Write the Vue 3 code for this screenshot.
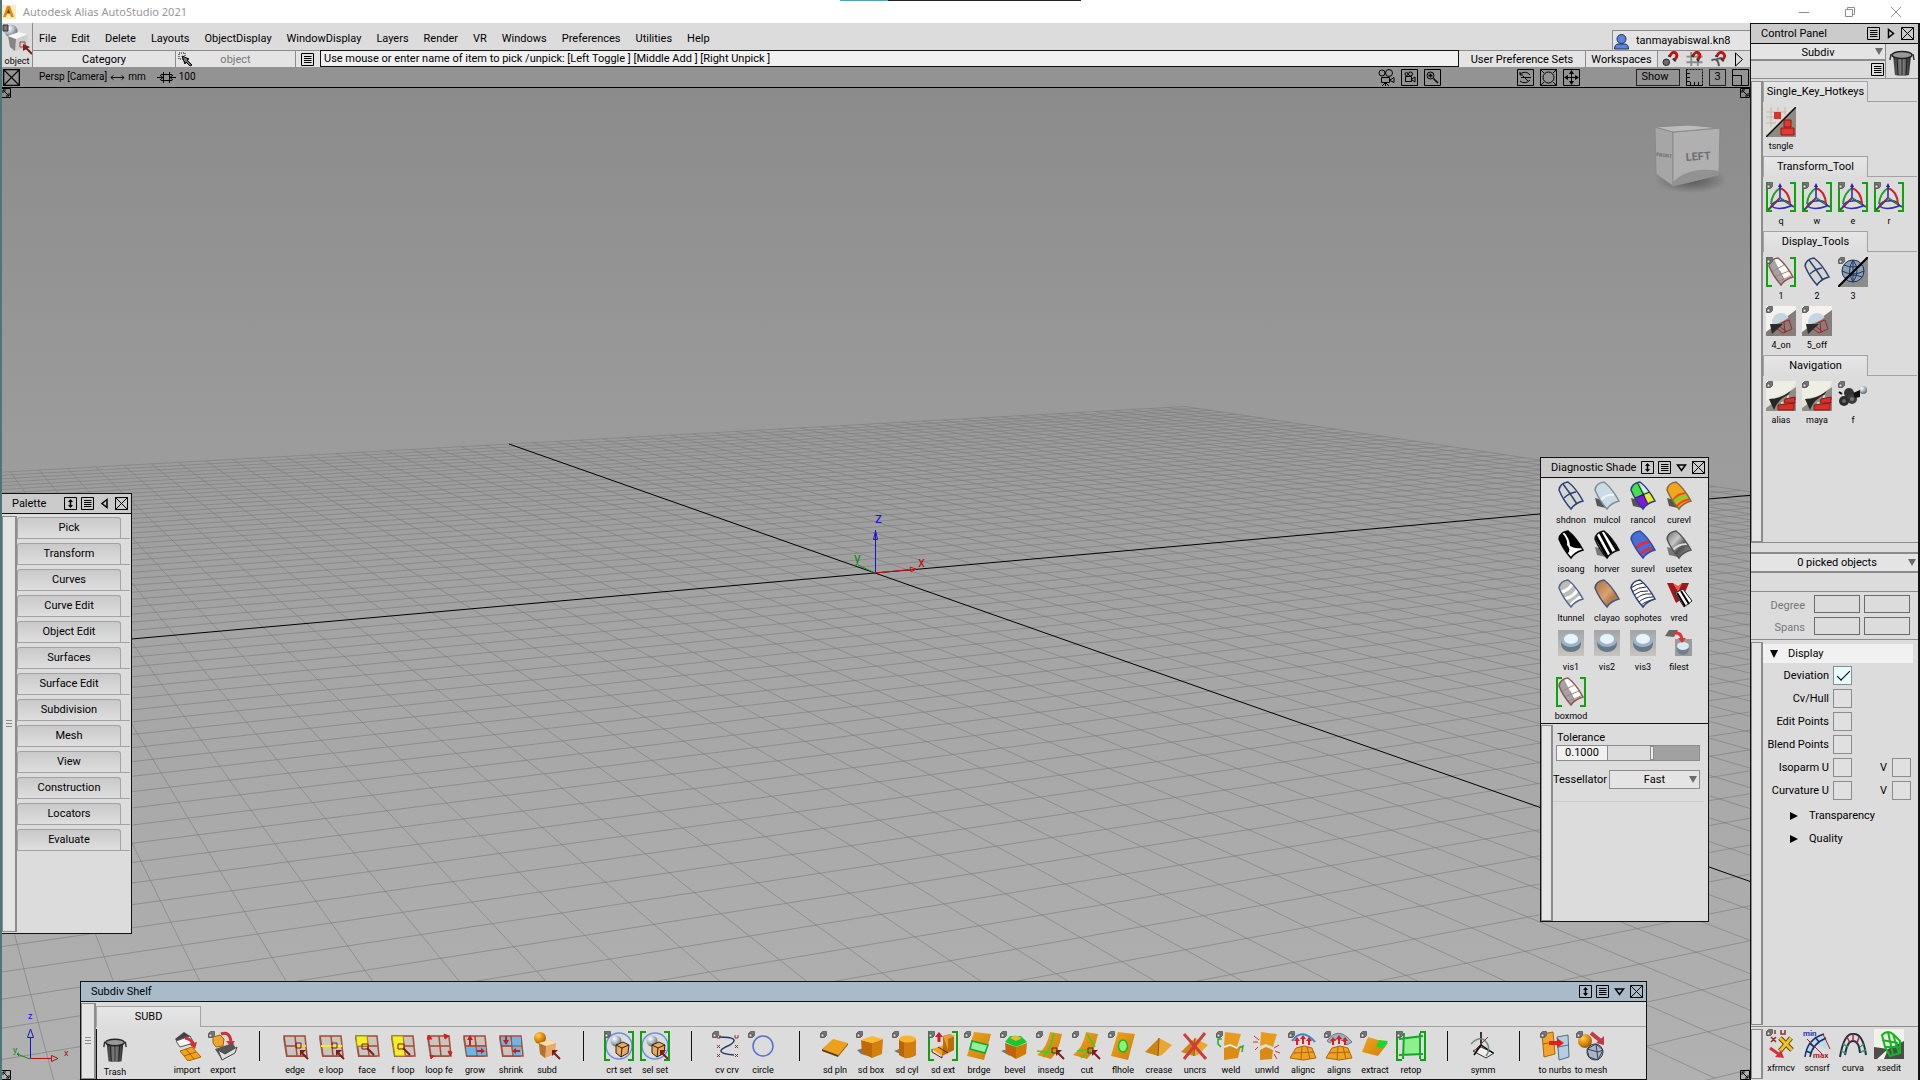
<template>
  <div class="app">
    <svg class="sprite" aria-hidden="true">
      <defs>
        <linearGradient id="g-metal" x1="0" y1="0" x2="1" y2="1">
          <stop offset="0" stop-color="#6a6a6a" /><stop offset=".35" stop-color="#c8c8c8" />
          <stop offset=".6" stop-color="#505050" /><stop offset="1" stop-color="#b0b0b0" />
        </linearGradient>
        <linearGradient id="g-clay" x1="0" y1="0" x2="1" y2="1">
          <stop offset="0" stop-color="#a8703f" /><stop offset=".5" stop-color="#d9a273" />
          <stop offset=".7" stop-color="#b37a4c" /><stop offset="1" stop-color="#c98e5f" />
        </linearGradient>
        <linearGradient id="g-gold" x1="0" y1="0" x2="1" y2="1">
          <stop offset="0" stop-color="#f0a41a" /><stop offset="1" stop-color="#cf7f0c" />
        </linearGradient>
        <linearGradient id="g-vis" x1="0" y1="0" x2="0" y2="1">
          <stop offset="0" stop-color="#a4a4a4" /><stop offset="1" stop-color="#c8c4c0" />
        </linearGradient>
        <linearGradient id="g-trash" x1="0" y1="0" x2="1" y2="0">
          <stop offset="0" stop-color="#333" /><stop offset=".5" stop-color="#8a8a8a" /><stop offset="1" stop-color="#222" />
        </linearGradient>
        <radialGradient id="g-ball" cx=".35" cy=".3" r=".8">
          <stop offset="0" stop-color="#fff" /><stop offset=".5" stop-color="#a9b4bd" /><stop offset="1" stop-color="#4c555c" />
        </radialGradient>
        <radialGradient id="g-orange" cx=".35" cy=".3" r=".8">
          <stop offset="0" stop-color="#ffd05a" /><stop offset=".5" stop-color="#e08d0a" /><stop offset="1" stop-color="#8a4d00" />
        </radialGradient>
        <clipPath id="c-patch"><path d="M3 9Q4 2 12 1Q20 7 27 20Q19 22 15 28Q7 19 3 9Z" /></clipPath>
      </defs>

      <!-- overlays -->
      <symbol id="brackets" viewBox="0 0 30 30">
        <path d="M6 1H1V29H6M24 1H29V29H24" fill="none" stroke="#0ca30c" stroke-width="2" />
      </symbol>
      <symbol id="option" viewBox="0 0 30 30">
        <path d="M2.500 .5H6.500V4.500L4.500 6.500H.5V2.500Z" fill="#777" stroke="#666" /><path d="M1 3H4V6H1Z" fill="#f2f2f2" stroke="#555" />
      </symbol>
      <symbol id="pick-arrow" viewBox="0 0 30 30">
        <path d="M28 28L22 22" stroke="#7b1b1b" stroke-width="2" /><path d="M20 25V19H26Z" fill="#7b1b1b" />
      </symbol>

      <!-- window glyphs -->
      <symbol id="t-size" viewBox="0 0 13 13">
        <path d="M.5 .5H12.5V12.5H.5Z" fill="none" stroke="#000" />
        <path d="M6.500 3V10" stroke="#000" stroke-width="1.500" /><path d="M6.500 2L9 5H4ZM6.500 11L9 8H4Z" />
      </symbol>
      <symbol id="t-list" viewBox="0 0 13 13">
        <path d="M.5 .5H12.5V12.5H.5ZM3 3.500H10.500M3 5.500H10.500M3 7.500H10.500M3 9.500H10.500" fill="none" stroke="#000" />
      </symbol>
      <symbol id="t-close" viewBox="0 0 13 13">
        <path d="M.5 .5H12.5V12.5H.5ZM.5 .5L12.500 12.500M12.500 .5L.5 12.500" fill="none" stroke="#000" />
      </symbol>
      <symbol id="t-down" viewBox="0 0 13 13"><path d="M2.500 4H10.500L6.500 9.500Z" fill="none" stroke="#000" stroke-width="1.500" /></symbol>
      <symbol id="t-left" viewBox="0 0 13 13"><path d="M9 2.500V10.500L4 6.500Z" fill="none" stroke="#000" stroke-width="1.500" /></symbol>
      <symbol id="t-right" viewBox="0 0 13 13"><path d="M4.500 2.500V10.500L9.500 6.500Z" fill="none" stroke="#000" stroke-width="1.500" /></symbol>
      <symbol id="t-corner" viewBox="0 0 10 10">
        <path d="M.5 .5H9.500V9.500H.5ZM2 2L8 8M2 5V2H5M8 5V8H5" fill="none" stroke="#000" />
      </symbol>

      <!-- view header glyphs -->
      <symbol id="v-camera" viewBox="0 0 17 17">
        <circle cx="4" cy="4" r="3" fill="none" stroke="#000" /><circle cx="11" cy="4" r="3.500" fill="none" stroke="#000" />
        <path d="M3.500 8.500H11.500V13.500H3.500ZM12 11L16 8.500V13.500L12 11.500M7 14L4 17M8 14L11 17M7.500 13.500V17" fill="none" stroke="#000" />
      </symbol>
      <symbol id="v-look" viewBox="0 0 17 17">
        <path d="M.5 .5H16.500V16.500H.5ZM4.500 7.500H10.500V12.500H4.500ZM11 10L14 8V13L11 11" fill="none" stroke="#000" />
        <circle cx="5.500" cy="5" r="1.500" fill="none" stroke="#000" /><circle cx="9.500" cy="5" r="2" fill="none" stroke="#000" />
      </symbol>
      <symbol id="v-zoom" viewBox="0 0 17 17">
        <path d="M.5 .5H16.500V16.500H.5Z" fill="none" stroke="#000" />
        <circle cx="6.500" cy="6.500" r="3.500" fill="none" stroke="#000" /><path d="M4.500 6.500H8.500M6.500 4.500V8.500M9.500 9.500L14 14" stroke="#000" stroke-width="1.500" />
      </symbol>
      <symbol id="v-tumble" viewBox="0 0 17 17">
        <path d="M.5 .5H16.500V16.500H.5ZM3 5Q9 1 13 6M3 12Q8 16 13 11M4 8.500H14M6 7L11 12M3 3V6H6" fill="none" stroke="#000" />
      </symbol>
      <symbol id="v-frame" viewBox="0 0 17 17">
        <path d="M.5 .5H16.500V16.500H.5ZM.5 .5L4 4M16.500 .5L13 4M.5 16.500L4 13M16.500 16.500L13 13" fill="none" stroke="#000" />
        <circle cx="8.500" cy="8.500" r="5.500" fill="none" stroke="#000" />
      </symbol>
      <symbol id="v-pan" viewBox="0 0 17 17">
        <path d="M.5 .5H16.500V16.500H.5ZM8.500 2V15M2 8.500H15" fill="none" stroke="#000" />
        <path d="M8.500 1L11 5H6ZM8.500 16L11 12H6ZM1 8.500L5 6V11ZM16 8.500L12 6V11Z" />
      </symbol>
      <symbol id="v-ruler" viewBox="0 0 17 17">
        <path d="M.5 .5H16.500V16.500H.5Z" fill="none" stroke="#000" stroke-dasharray="2 1" />
        <path d="M.5 .5V16.500H16.500M1 4.500H4M1 8.500H4M1 12.500H4M4.500 16V13M8.500 16V13M12.500 16V13" fill="none" stroke="#000" />
      </symbol>
      <symbol id="v-layout" viewBox="0 0 17 17"><path d="M.5 16.500V.5H16.500V16.500ZM.5 6.500H9.500V16.500" fill="none" stroke="#000" /></symbol>
      <symbol id="v-arrows" viewBox="0 0 17 11"><path d="M1 5.500H16M4 3L1 5.500L4 8M13 3L16 5.500L13 8" fill="none" stroke="#000" /></symbol>
      <symbol id="v-grid" viewBox="0 0 19 13">
        <path d="M6.500 1V12M12.500 1V12M4 3.500H15M4 9.500H15" stroke="#000" /><path d="M0 6.500H6M13 6.500H19M3 4L6 6.500L3 9M16 4L13 6.500L16 9" stroke="#000" fill="none" />
      </symbol>

      <!-- top bar pictures -->
      <symbol id="logo" viewBox="0 0 14 14">
        <path d="M0 0H14V14H0Z" fill="#fdebc8" /><path d="M5 1H8L12 12H9L8 9H5L4 12H1Z" fill="#dd8a0c" /><path d="M6.500 4L8 8H5Z" fill="#6b3b00" />
      </symbol>
      <symbol id="pick-object" viewBox="0 0 30 32">
        <circle cx="9" cy="8" r="6.500" fill="url(#g-ball)" /><path d="M1 2H6V8H1Z" fill="#777" stroke="#333" />
        <path d="M6 13L17 9L26 11L25 25L13 28L8 24Z" fill="#cfcfcf" /><path d="M6 13L14 16L13 28L8 24Z" fill="#858585" /><path d="M6 13L17 9L26 11L14 16Z" fill="#f6f6f6" />
        <path d="M18 19H23V24H18Z" fill="none" stroke="#a04040" /><path d="M30 31L24 25" stroke="#7b2020" stroke-width="2" /><path d="M21 28V21L28 24Z" fill="#7b2020" />
      </symbol>
      <symbol id="user" viewBox="0 0 16 17">
        <circle cx="8" cy="6" r="4.500" fill="#5b84dd" stroke="#1d2d55" /><path d="M1 16Q1 11 5 11H11Q15 11 15 16Z" fill="#5b84dd" stroke="#1d2d55" />
      </symbol>
      <symbol id="cursor" viewBox="0 0 15 15">
        <path d="M1 1H7V7H1Z" fill="none" stroke="#000" stroke-dasharray="1 1" /><path d="M4 4L11 7L9 8L14 13L12 14L8 10L7 12Z" fill="#777" stroke="#000" />
      </symbol>
      <symbol id="snap-point" viewBox="0 0 18 17">
        <circle cx="4" cy="12" r="3.500" fill="#6b6b6b" stroke="#222" /><path d="M8 5Q10 0 14 2Q17 5 13 9" fill="none" stroke="#c80f0f" stroke-width="3" /><path d="M6 5L9 6M11 8L14 11" stroke="#333" stroke-width="2" />
      </symbol>
      <symbol id="snap-grid" viewBox="0 0 18 17">
        <path d="M5 1V16M12 1V16M0 6H17M0 12H17" stroke="#8b8b8b" stroke-width="2" /><path d="M7 5Q9 0 13 2Q16 5 12 9" fill="none" stroke="#c80f0f" stroke-width="3" /><path d="M5 5L8 6M11 8L13 11" stroke="#333" stroke-width="2" />
      </symbol>
      <symbol id="snap-curve" viewBox="0 0 18 17">
        <path d="M1 10Q8 6 9 16M6 9L12 7" fill="none" stroke="#555" stroke-width="2" /><path d="M7 5Q9 0 13 2Q17 5 13 9" fill="none" stroke="#c80f0f" stroke-width="3" /><path d="M5 5L8 6M11 8L14 11" stroke="#333" stroke-width="2" />
      </symbol>

      <!-- shelf pictures -->
      <symbol id="trash" viewBox="0 0 30 30">
        <path d="M6 8H24L22 28Q15 30 8 28Z" fill="url(#g-trash)" /><path d="M10 10L11 28M15 10V28M20 10L19 28" stroke="#1c1c1c" />
        <ellipse cx="15" cy="8" rx="10" ry="3.500" fill="#999" stroke="#222" stroke-width="1.500" /><path d="M4 7L3 13M26 7L27 13" stroke="#333" stroke-width="1.500" />
      </symbol>
      <symbol id="keys" viewBox="0 0 30 30">
        <path d="M0 0H30L0 30Z" fill="#deddd5" /><path d="M30 0V30H0Z" fill="#8d8b82" /><path d="M0 5H20M0 10H15M0 16H10M5 0V20M12 0V12M19 0V8" stroke="#bdbbb2" />
        <path d="M8 5H15V12H8Z" fill="#d8322b" /><path d="M18 13H25V20H18ZM15 21H28V28H15Z" fill="#e23a33" stroke="#8e1712" /><path d="M0 30L30 0" stroke="#000" stroke-width="1.500" />
      </symbol>
      <symbol id="gizmo" viewBox="0 0 30 30">
        <path d="M14 16L2 28M14 16L28 25" stroke="#4a4a4a" stroke-width="2" /><path d="M5 24Q12 29 25 24Q24 18 14 19Q8 19 5 24" fill="none" stroke="#2a2ac0" stroke-width="1.500" />
        <path d="M14 6Q23 9 24 22" fill="none" stroke="#d42020" stroke-width="2" /><path d="M14 6Q6 11 5 22" fill="none" stroke="#1fa01f" stroke-width="2" />
        <path d="M14 17V3" stroke="#2020c0" stroke-width="1.500" /><path d="M14 1L16 5H12Z" fill="#2020c0" /><path d="M14 16L24 22" stroke="#1fa01f" /><path d="M14 16L4 25" stroke="#d42020" />
      </symbol>
      <symbol id="box-shade" viewBox="0 0 30 30">
        <g clip-path="url(#c-patch)"><path d="M0 0H30V30H0Z" fill="#fff" /><path d="M0 0L8 2L20 26L12 30L0 12Z" fill="#a4a4a4" /><path d="M5 15L18 8M8 20L23 14M11 25L27 18M14 14L20 27" stroke="#a88078" fill="none" /></g>
        <use href="#patch-line" stroke="#8a5a50" />
      </symbol>
      <symbol id="patch-line" viewBox="0 0 30 30"><path d="M3 9Q4 2 12 1Q20 7 27 20Q19 22 15 28Q7 19 3 9Z" fill="none" stroke-width="1.500" /></symbol>
      <symbol id="wire" viewBox="0 0 30 30">
        <path d="M3 9Q4 2 12 1Q20 7 27 20Q19 22 15 28Q7 19 3 9Z" fill="#d6d6d2" /><path d="M7 3Q14 12 21 23M8 17Q13 12 20 11" fill="none" stroke="#2c4078" stroke-width="1.500" />
        <use href="#patch-line" stroke="#2c4078" />
      </symbol>
      <symbol id="wire-ball" viewBox="0 0 30 30">
        <path d="M30 0V30H0Z" fill="#8c8c8c" /><circle cx="15" cy="14" r="11" fill="#8ba0b5" /><path d="M4 14Q15 20 26 14M15 3Q8 14 15 25M15 3Q23 14 15 25M6 8Q15 12 24 8M7 21Q15 16 24 20M15 3V25" fill="none" stroke="#1f3157" />
        <circle cx="15" cy="14" r="11" fill="none" stroke="#1f3157" /><path d="M0 30L30 0" stroke="#000" stroke-width="2" />
      </symbol>
      <symbol id="dome" viewBox="0 0 30 30">
        <path d="M0 0H30V30H0Z" fill="#f3f2ee" /><path d="M30 4V30H0V26Z" fill="#7d7976" /><circle cx="15" cy="16" r="9" fill="#c6d6e0" /><path d="M5 19Q20 17 30 4V30H8Z" fill="#857e7a" />
        <path d="M10 22Q16 15 23 14L26 23L17 27ZM13 20L21 26M18 16L19 27" fill="none" stroke="#a62525" /><path d="M4 18L17 18L6 28Z" fill="#2b2b2b" />
      </symbol>
      <symbol id="nav" viewBox="0 0 30 30">
        <path d="M0 0H30V30H0Z" fill="#e4e2d6" /><path d="M30 6V30H0V27Z" fill="#8f8d86" /><path d="M15 22L30 20M22 14V29" stroke="#d8d5cc" stroke-width="2" /><path d="M19 18L29 16V22H18ZM12 24L28 22V29H12Z" fill="#d4302c" stroke="#8e1712" />
        <path d="M0 0H30Q26 14 3 18L0 20Z" fill="#efeee4" /><path d="M3 18Q14 18 25 10L22 14Q12 18 8 29Z" fill="#262626" />
      </symbol>
      <symbol id="film" viewBox="0 0 30 30">
        <circle cx="11" cy="12" r="5" fill="#333" /><circle cx="14" cy="18" r="5" fill="#3c3c3c" /><circle cx="6" cy="20" r="5" fill="#2b2b2b" /><circle cx="25" cy="9" r="4" fill="url(#g-ball)" />
        <path d="M15 12L22 9V16L17 17Z" fill="#111" /><circle cx="14" cy="18" r="2" fill="#777" /><circle cx="6" cy="20" r="2" fill="#666" /><path d="M1 11L4 13" stroke="#000" stroke-width="2" />
      </symbol>
      <symbol id="s-mul" viewBox="0 0 30 30"><path d="M3 17L14 20V27L5 25Z" fill="#555" /><path d="M3 9Q4 2 12 1Q20 7 27 20Q19 22 15 28Q7 19 3 9Z" fill="#ccdbe5" /><path d="M9 19Q14 13 22 14" stroke="#eef6fa" stroke-width="2" fill="none" /><use href="#patch-line" stroke="#7d909e" /></symbol>
      <symbol id="s-ran" viewBox="0 0 30 30"><path d="M3 17L14 20V27L5 25Z" fill="#555" /><g clip-path="url(#c-patch)"><path d="M0 0H30V30H0Z" fill="#44e04e" /><path d="M10 0L16 12L30 8V0Z" fill="#d8ebf2" /><path d="M7 17L16 12L22 30H7Z" fill="#7d18e0" /><path d="M16 13L30 9V24L20 24Z" fill="#e9ef27" /><path d="M9 1L21 25M7 17L22 11" stroke="#223" /></g><use href="#patch-line" stroke="#2c4078" /></symbol>
      <symbol id="s-cur" viewBox="0 0 30 30"><path d="M3 17L14 20V27L5 25Z" fill="#555" /><g clip-path="url(#c-patch)"><path d="M0 0H30V30H0Z" fill="#f2a51e" /><path d="M9 19Q14 12 23 12" stroke="#e75218" stroke-width="2" fill="none" /><path d="M10 21Q16 15 25 15" stroke="#7bd624" stroke-width="3" fill="none" /><path d="M13 25Q18 19 27 18" stroke="#ec4a1c" stroke-width="2" fill="none" /></g><use href="#patch-line" stroke="#8a6a3a" /></symbol>
      <symbol id="s-iso" viewBox="0 0 30 30"><g clip-path="url(#c-patch)"><path d="M0 0H30V30H0Z" /><path d="M7 1Q14 9 14 16Q21 20 28 17L28 23Q17 23 15 29L11 24Q16 20 11 15Q12 9 6 3Z" fill="#fff" /></g><use href="#patch-line" stroke="#000" /></symbol>
      <symbol id="s-hor" viewBox="0 0 30 30"><path d="M3 17L14 20V27L5 25Z" fill="#777" /><g clip-path="url(#c-patch)"><path d="M0 0H30V30H0Z" fill="#fff" /><path d="M2 3L17 30M7 0L22 28M12 -1L28 25" stroke="#000" stroke-width="3" /></g><use href="#patch-line" stroke="#111" /></symbol>
      <symbol id="s-sur" viewBox="0 0 30 30"><g clip-path="url(#c-patch)"><path d="M0 0H30V30H0Z" fill="#496ed6" /><path d="M8 18Q14 12 22 12M12 25Q18 18 27 18" stroke="#d92e46" stroke-width="3" fill="none" /></g><use href="#patch-line" stroke="#2c4aa8" /></symbol>
      <symbol id="s-use" viewBox="0 0 30 30"><path d="M3 17L14 20V27L5 25Z" fill="#777" /><path d="M3 9Q4 2 12 1Q20 7 27 20Q19 22 15 28Q7 19 3 9Z" fill="url(#g-metal)" /><path d="M9 20Q14 14 23 14" stroke="#ddd" stroke-width="2" fill="none" /><use href="#patch-line" stroke="#555" /></symbol>
      <symbol id="s-tun" viewBox="0 0 30 30"><g clip-path="url(#c-patch)"><path d="M0 0H30V30H0Z" fill="#bcbcb8" /><path d="M3 13Q12 13 17 4M8 20Q19 18 22 9M15 26Q20 20 27 17" stroke="#fff" stroke-width="3" fill="none" /></g><use href="#patch-line" stroke="#55658c" /></symbol>
      <symbol id="s-clay" viewBox="0 0 30 30"><path d="M3 9Q4 2 12 1Q20 7 27 20Q19 22 15 28Q7 19 3 9Z" fill="url(#g-clay)" /><use href="#patch-line" stroke="#4d5478" /></symbol>
      <symbol id="s-soph" viewBox="0 0 30 30"><g clip-path="url(#c-patch)"><path d="M0 0H30V30H0Z" fill="#fff" /><path d="M3 9Q8 5 15 4M4 13Q10 8 18 8M6 16Q12 11 20 12M8 20Q14 14 23 15M11 23Q16 18 25 18M13 26Q19 21 28 21" stroke="#2b2b38" stroke-width="1" fill="none" /></g><use href="#patch-line" stroke="#2c4078" /></symbol>
      <symbol id="s-vred" viewBox="0 0 30 30"><path d="M3 4H9L14 12L18 4H25L18 20L12 24Z" fill="#a3171b" /><path d="M9 4L14 12L18 4L14 7Z" fill="#ed5a3a" /><path d="M11 14L19 10L28 22L20 28Z" fill="#fff" stroke="#222" /><path d="M13 14L21 27M17 12L25 25" stroke="#000" stroke-width="2" /></symbol>
      <symbol id="s-vis" viewBox="0 0 30 30"><path d="M2 2H28V28H2Z" fill="url(#g-vis)" /><ellipse cx="15" cy="16" rx="10" ry="8" fill="#65798a" /><ellipse cx="15" cy="12" rx="10" ry="7" fill="#9cb4c4" /><ellipse cx="15" cy="11" rx="7" ry="5" fill="#e8f3fa" /></symbol>
      <symbol id="s-file" viewBox="0 0 30 30"><path d="M11 11H28V28H11Z" fill="#9b9b9b" /><ellipse cx="19" cy="21" rx="6" ry="6" fill="#6f818f" /><ellipse cx="19" cy="18" rx="6" ry="4" fill="#dce9f1" /><path d="M1 8L5 2H14L10 9Z" fill="#666" /><path d="M10 5Q17 4 18 11" stroke="#dd3540" stroke-width="3" fill="none" /><path d="M14 10H22L18 15Z" fill="#dd3540" /></symbol>

      <symbol id="import" viewBox="0 0 30 30"><path d="M3 8L12 1L18 5L8 14Z" fill="#444" /><path d="M4 10L18 5L22 12L8 16Z" fill="#f4f4f4" stroke="#555" /><path d="M13 7Q20 8 21 14" stroke="#d0323a" stroke-width="3" fill="none" /><path d="M17 13L25 11L23 18Z" fill="#d0323a" /><path d="M8 20L20 16L29 26L16 30Z" fill="#f3a31a" stroke="#a66505" /><path d="M12 25L24 21M14 18L22 28" stroke="#a66505" /></symbol>
      <symbol id="export" viewBox="0 0 30 30"><path d="M5 6L12 4L16 8L15 15L8 16L5 12Z" fill="#f0a62c" stroke="#9a6413" /><path d="M13 3Q22 0 23 11" stroke="#d0323a" stroke-width="3" fill="none" /><path d="M18 10H27L23 16Z" fill="#d0323a" /><path d="M7 18L25 12L28 18L14 29Z" fill="#555" /><path d="M10 19L17 23L29 16L27 22L14 29Z" fill="#ddd" stroke="#444" /></symbol>
      <symbol id="mesh" viewBox="0 0 30 30"><path d="M3 7L4 5L25 25L24 26H6Z" fill="#7c7c7c" /><path d="M4 5H25L27 25H7Z" fill="#c9c5bf" stroke="#a84a35" stroke-width="1.500" /><path d="M15 5L17 25M5 15H26" stroke="#a84a35" stroke-width="1.500" /></symbol>
      <symbol id="edge" viewBox="0 0 30 30"><use href="#mesh" /><path d="M17 15H26" stroke="#e9dd2c" stroke-width="2" /><path d="M16 12H21V17H16Z" fill="none" stroke="#7b1b1b" /><use href="#pick-arrow" /></symbol>
      <symbol id="eloop" viewBox="0 0 30 30"><use href="#mesh" /><path d="M5 15H26" stroke="#f5ef21" stroke-width="2" /><path d="M16 12H21V17H16Z" fill="none" stroke="#7b1b1b" /><use href="#pick-arrow" /></symbol>
      <symbol id="face" viewBox="0 0 30 30"><use href="#mesh" /><path d="M4 5H15L16 15H5Z" fill="#f6ee2d" stroke="#a89312" /><path d="M10 13H16V18H10Z" fill="none" stroke="#7b1b1b" /><path d="M22 24L15 17" stroke="#7b1b1b" stroke-width="2" /></symbol>
      <symbol id="floop" viewBox="0 0 30 30"><use href="#mesh" /><path d="M4 5H15L17 25H7Z" fill="#f6ee2d" stroke="#a89312" /><path d="M10 13H16V18H10Z" fill="none" stroke="#7b1b1b" /><path d="M22 24L15 17" stroke="#7b1b1b" stroke-width="2" /></symbol>
      <symbol id="loopfe" viewBox="0 0 30 30"><use href="#mesh" /><path d="M3 8L5 4L8 8ZM20 3L25 5L21 8ZM24 20L28 21L26 25ZM6 24L10 25L7 28Z" fill="#d02020" stroke="#d02020" /></symbol>
      <symbol id="grow" viewBox="0 0 30 30"><use href="#mesh" /><path d="M6 16H26V24H7Z" fill="#69b7e9" /><path d="M10 15V7M17 20H23" stroke="#c51c1c" stroke-width="2" /><path d="M10 4L13 9H7ZM21 17L25 20L21 23Z" fill="#c51c1c" /><path d="M15 5L17 25M5 15H26" stroke="#a84a35" /></symbol>
      <symbol id="shrink" viewBox="0 0 30 30"><use href="#mesh" /><path d="M5 6H14V14H16V24H25V6H16V14H6Z" fill="#69b7e9" /><path d="M10 5V11M20 20H24" stroke="#c51c1c" stroke-width="2" /><path d="M10 14L13 9H7ZM16 20L20 17V23Z" fill="#c51c1c" /><path d="M15 5L17 25M5 15H26" stroke="#a84a35" /></symbol>
      <symbol id="subd" viewBox="0 0 30 30"><circle cx="8" cy="7" r="6" fill="url(#g-orange)" /><path d="M7 12L18 9L24 12L23 23L13 27L8 23Z" fill="#e6ab6a" /><path d="M7 12L14 15L13 27L8 23Z" fill="#b3722f" /><path d="M7 12L18 9L24 12L14 15Z" fill="#fbdcae" /><use href="#pick-arrow" /></symbol>
      <symbol id="crtset" viewBox="0 0 30 30"><circle cx="15" cy="15" r="13" fill="none" stroke="#6d8fe0" stroke-width="1.500" /><circle cx="12" cy="10" r="5.500" fill="url(#g-ball)" /><path d="M12 14L19 11L25 14L24 22L17 26L12 22Z" fill="#eaa95a" stroke="#222" /><path d="M12 14L18 17L25 14M18 17L17 26" stroke="#222" fill="none" /></symbol>
      <symbol id="selset" viewBox="0 0 30 30"><use href="#crtset" /><use href="#pick-arrow" /></symbol>
      <symbol id="cvcrv" viewBox="0 0 30 30"><path d="M7 6Q30 6 18 14Q-2 22 22 24" fill="none" stroke="#26386a" stroke-width="1.500" /><path d="M5 4V7H8V4M23 4V7H26V4M5 14L8 17M8 14L5 17M23 14L26 17M26 14L23 17M5 23L8 26M8 23L5 26M23 23L26 26M26 23L23 26" fill="none" stroke="#90302c" /></symbol>
      <symbol id="circle" viewBox="0 0 30 30"><circle cx="15" cy="15" r="10" fill="none" stroke="#5570ce" stroke-width="1.500" /></symbol>
      <symbol id="plane" viewBox="0 0 30 30"><path d="M2 18L13 8L28 12L18 24Z" fill="#eca01c" /><path d="M2 18L18 24V26L2 20Z" fill="#5c3905" /><path d="M18 24L28 12V14L18 26Z" fill="#b36c0a" /></symbol>
      <symbol id="box" viewBox="0 0 30 30"><path d="M1 19L12 16V25L5 23Z" fill="#777" /><path d="M5 9L16 12V27L6 22Z" fill="#bf6907" /><path d="M16 12L27 8L26 23L16 27Z" fill="#d4800c" /><path d="M5 9L16 5L27 8L16 12Z" fill="#fdb82c" /></symbol>
      <symbol id="cyl" viewBox="0 0 30 30"><path d="M2 20L12 16V25Z" fill="#777" /><path d="M7 8V24Q15 30 24 24V8Z" fill="#b86508" /><path d="M12 9V27Q18 28 24 24V8Z" fill="#d27d10" /><ellipse cx="15.500" cy="8" rx="8.500" ry="3.500" fill="#fab42c" /></symbol>
      <symbol id="ext" viewBox="0 0 30 30"><path d="M4 18L16 14L26 19L14 25Z" fill="#f0a01c" /><path d="M14 25L26 19V6L22 3L15 5V16" fill="#b96c0a" /><path d="M15 5L22 3L27 5L20 8V19" fill="#e89c2a" /><path d="M4 18V21L14 27V25M10 16L20 22" fill="none" stroke="#4a2c02" /><path d="M11 11V4" stroke="#c81f2a" stroke-width="3" /><path d="M11 1L15 6H7Z" fill="#c81f2a" /></symbol>
      <symbol id="bridge" viewBox="0 0 30 30"><path d="M10 1L27 3L20 29L3 25Z" fill="url(#g-gold)" /><path d="M8 10L24 14L21 22L6 18Z" fill="#8df0a2" stroke="#10a52d" stroke-width="1.500" /></symbol>
      <symbol id="bevel" viewBox="0 0 30 30"><path d="M1 20L10 17V25Z" fill="#777" /><path d="M5 12L16 16V28L6 22Z" fill="#bf6407" /><path d="M16 16L27 12L26 23L16 28Z" fill="#d27c06" /><path d="M5 11L10 5H21L27 11L16 16Z" fill="#16c832" /><path d="M10 7L15 4L22 7L16 10Z" fill="#f2b72c" /></symbol>
      <symbol id="insedg" viewBox="0 0 30 30"><path d="M14 1L26 3Q22 22 15 28L1 24Q11 17 14 1Z" fill="url(#g-gold)" /><path d="M18 2Q15 19 7 26M1 20L20 22" fill="none" stroke="#37d02a" stroke-width="1.500" /><path d="M16 17H21V22H16Z" fill="none" stroke="#7b1b1b" /><use href="#pick-arrow" /></symbol>
      <symbol id="cut" viewBox="0 0 30 30"><path d="M14 1L26 3Q22 22 15 28L1 24Q11 17 14 1Z" fill="url(#g-gold)" /><path d="M15 3L23 16M5 20L20 18L9 27" fill="none" stroke="#37d02a" stroke-width="1.500" /><path d="M16 17H21V22H16Z" fill="none" stroke="#7b1b1b" /><use href="#pick-arrow" /></symbol>
      <symbol id="flhole" viewBox="0 0 30 30"><path d="M10 1L27 3L20 29L3 25Z" fill="url(#g-gold)" /><ellipse cx="15" cy="15" rx="4.500" ry="6" fill="#8ff07a" stroke="#14b82a" stroke-width="1.500" /></symbol>
      <symbol id="crease" viewBox="0 0 30 30"><path d="M1 21L15 7L18 21L14 25Z" fill="#cc8413" /><path d="M15 7L28 14L18 24L14 25Z" fill="#eaa62e" /><path d="M15 7L14 25" stroke="#8c5b0c" /></symbol>
      <symbol id="uncrs" viewBox="0 0 30 30"><use href="#crease" /><path d="M4 3L26 28M25 2L4 28" stroke="#cf3c3c" stroke-width="3" /></symbol>
      <symbol id="weld" viewBox="0 0 30 30"><path d="M9 1L25 3L21 16L14 13L8 15Z" fill="#e79b1c" /><path d="M8 17L14 15L21 18L25 14L22 27L8 29Z" fill="#dc8c12" /><path d="M6 8H2V13L5 16M23 17L27 15L26 21" fill="none" stroke="#1bb02f" stroke-width="1.500" /><path d="M8 16L14 14L21 17" stroke="#fff" fill="none" /></symbol>
      <symbol id="unwld" viewBox="0 0 30 30"><path d="M9 1L25 3L21 16L14 13L8 15Z" fill="#e79b1c" /><path d="M8 19L14 16L21 19L20 28L8 29Z" fill="#d98a13" /><path d="M2 5L7 9M1 11H6M6 16L3 19M22 17L27 14M23 20L28 22M22 23L25 28" stroke="#e02a2a" /></symbol>
      <symbol id="dometile" viewBox="0 0 30 30"><path d="M2 27L8 17L16 15L24 17L28 27L15 29Z" fill="#f1a31e" stroke="#a8680c" /><path d="M14 15L13 29M5 22L26 21M19 16L22 28" fill="none" stroke="#a8680c" /><path d="M9 14V9M21 14V9M15 13V7" stroke="#d42222" stroke-width="2" /><path d="M9 6L12 10H6ZM21 6L24 10H18ZM15 4L18 8H12Z" fill="#d42222" /></symbol>
      <symbol id="alignc" viewBox="0 0 30 30"><path d="M4 10Q14 -4 27 11" fill="none" stroke="#4584d0" stroke-width="2" /><use href="#dometile" /></symbol>
      <symbol id="aligns" viewBox="0 0 30 30"><path d="M3 10Q14 -6 28 11L23 14Q14 3 6 12Z" fill="#9db0bf" stroke="#687987" /><use href="#dometile" /></symbol>
      <symbol id="extract" viewBox="0 0 30 30"><path d="M8 6L28 12L18 25L2 21Z" fill="url(#g-gold)" /><path d="M19 9L28 10L24 17L16 16Z" fill="#18d92c" /></symbol>
      <symbol id="retop" viewBox="0 0 30 30"><path d="M7 6L24 5V24L7 25Z" fill="#8df08d" /><path d="M3 8L27 5M3 24L27 23M8 2L7 28M24 2V28" stroke="#13a82c" stroke-width="2" fill="none" /></symbol>
      <symbol id="symm" viewBox="0 0 30 30"><path d="M5 20L13 16L26 22L18 27Z" fill="#eee" stroke="#333" /><path d="M13 1V14L6 24M13 14L25 22" stroke="#000" stroke-width="1.500" fill="none" /><path d="M3 13Q14 2 20 14Q22 20 18 25" fill="none" stroke="#6e8c72" stroke-width="1.500" /><path d="M20 6L8 18" stroke="#90302c" /></symbol>
      <symbol id="tonurbs" viewBox="0 0 30 30"><path d="M2 3L13 1L15 23L4 26Z" fill="#f2a52c" stroke="#a5660a" /><path d="M3 13L14 11" stroke="#a5660a" /><path d="M17 6L28 4L29 26L19 29Z" fill="#b6cfe0" stroke="#4c6c86" /><path d="M18 16L29 14" stroke="#4c6c86" /><path d="M9 12H18" stroke="#e02020" stroke-width="4" /><path d="M17 7L24 12L17 17Z" fill="#e02020" /></symbol>
      <symbol id="tomesh" viewBox="0 0 30 30"><circle cx="9" cy="10" r="7" fill="url(#g-orange)" /><path d="M15 2L26 11" stroke="#c23b44" stroke-width="4" /><path d="M20 12L28 5V14Z" fill="#c23b44" /><circle cx="19" cy="21" r="8" fill="#aab6c3" stroke="#333f52" /><path d="M11 18L20 13L27 19L22 29L13 26ZM11 18L22 21L27 19M20 13L22 29" fill="none" stroke="#333f52" /></symbol>
      <symbol id="xfrmcv" viewBox="0 0 30 30"><path d="M9 1V5M15 1V5H19V1M5 8L10 13M10 8L5 13" stroke="#90302c" stroke-width="1.500" fill="none" /><path d="M14 9L26 21M25 9L14 22" stroke="#5e4708" stroke-width="5" /><path d="M14 9L26 21M25 9L14 22" stroke="#f2c31e" stroke-width="3" /><path d="M4 19L14 26" stroke="#d3323a" stroke-width="3" /><path d="M18 29L9 28L15 21Z" fill="#d3323a" /></symbol>
      <symbol id="scnsrf" viewBox="0 0 30 30"><path d="M3 28Q6 9 22 5L26 21L15 15Z" fill="#b8dcec" /><path d="M3 28Q5 10 22 5M8 28Q10 15 24 9M4 22L9 24M7 14L12 18M13 8L17 13" fill="none" stroke="#1d2b66" stroke-width="1.500" /><path d="M5 10L20 25M21 5L28 20" stroke="#a52020" /></symbol>
      <symbol id="curva" viewBox="0 0 30 30"><path d="M2 28Q6 4 15 5Q25 4 28 26M7 26Q9 12 15 12Q21 12 22 24" fill="none" stroke="#23304c" stroke-width="2" /><path d="M3 22L8 24M5 15L10 18M22 18L26 15M23 23L28 21" stroke="#2ba05a" stroke-width="1.500" /><path d="M9 8L12 14M15 5V12M21 8L19 14" stroke="#b02a2a" stroke-width="1.500" /></symbol>
      <symbol id="xsedit" viewBox="0 0 30 30"><path d="M0 0H30V30H0Z" fill="#f2f3e8" /><path d="M0 18L14 20L3 30H0ZM14 20L30 12V30H10Z" fill="#4c4c48" /><path d="M8 6Q14 0 20 6L26 12V24L16 27L11 18ZM8 11L24 14M11 18L27 18M14 3L19 26M19 5L25 25" fill="none" stroke="#13b523" stroke-width="2" /></symbol>
    </svg>

    <header class="titlebar">
      <svg class="logo"><use href="#logo" /></svg>
      <span class="app-title">Autodesk Alias AutoStudio 2021</span>
      <span class="top-strip" />
      <div class="window-buttons">
        <button aria-label="Minimize"><svg viewBox="0 0 12 12"><path d="M1 6.500H11" /></svg></button>
        <button aria-label="Restore"><svg viewBox="0 0 12 12"><path d="M1.500 3.500H8.500V10.500H1.500ZM3.500 3V1.500H10.500V8.500H9" /></svg></button>
        <button aria-label="Close"><svg viewBox="0 0 12 12"><path d="M1 1L11 11M11 1L1 11" /></svg></button>
      </div>
    </header>

    <div class="workspace">
      <main class="main">
        <div class="command">
          <button class="tool-button">
            <svg><use href="#pick-object" /></svg>
            <span>object</span>
          </button>
          <div class="command-rows">
            <div class="menu-row">
              <nav class="menus">
                <a v-for="m in menus" :key="m" href="#">{{ m }}</a>
              </nav>
              <button class="user"><svg><use href="#user" /></svg>tanmayabiswal.kn8</button>
            </div>
            <div class="prompt-row">
              <button class="category">Category</button>
              <button class="pick-kind"><svg><use href="#cursor" /></svg><span>object</span></button>
              <button class="history" aria-label="History"><svg><use href="#t-list" /></svg></button>
              <input v-model="prompt" class="prompt" aria-label="Prompt" />
              <button class="prefs">User Preference Sets</button>
              <button class="spaces">Workspaces</button>
              <div class="snaps">
                <button v-for="s in snaps" :key="s" :aria-label="s"><svg><use :href="`#${s}`" /></svg></button>
                <button class="more" aria-label="More"><svg viewBox="0 0 9 15"><path d="M1 1V14L8 7.500Z" /></svg></button>
              </div>
            </div>
          </div>
        </div>

        <div class="view-bar">
          <button aria-label="Close view"><svg><use href="#t-close" /></svg></button>
          <span class="camera">Persp [Camera]</span>
          <svg class="arrows"><use href="#v-arrows" /></svg>
          <span class="unit">mm</span>
          <svg class="grid-size"><use href="#v-grid" /></svg>
          <span>100</span>
          <div class="view-tools">
            <button v-for="v in ['v-camera', 'v-look', 'v-zoom']" :key="v" :aria-label="v"><svg><use :href="`#${v}`" /></svg></button>
          </div>
          <div class="view-tools moves">
            <button v-for="v in ['v-tumble', 'v-frame', 'v-pan']" :key="v" :aria-label="v"><svg><use :href="`#${v}`" /></svg></button>
          </div>
          <div class="view-tools">
            <button class="show">Show</button>
            <button aria-label="Ruler"><svg><use href="#v-ruler" /></svg></button>
            <button class="three">3</button>
            <button aria-label="Layout"><svg><use href="#v-layout" /></svg></button>
          </div>
        </div>

        <div class="scene">
          <svg class="grid" viewBox="2 88 1748 992" preserveAspectRatio="xMidYMid slice">
            <path :d="gridPath" class="grid-line" />
            <path :d="axisPath" class="axis-line" />
            <g class="axis-mark">
              <path d="M875.500 573V530M873.500 539.500L875.500 531L877.500 539.500Z" stroke="#1414d8" />
              <path d="M875 573L916 569M910 567L916 569L911 572Z" stroke="#d01414" />
              <path d="M875 573L858 565" stroke="#128a12" />
              <text x="875" y="523" fill="#1414d8">z</text>
              <text x="918" y="567" fill="#b01414">x</text>
              <text x="854" y="563" fill="#128a12">y</text>
            </g>
            <g class="axis-mark small">
              <path d="M30.500 1059V1038M27.500 1037.500L30.500 1029L33.500 1037.500Z" stroke="#1414d8" />
              <path d="M30 1058.500H51M51.500 1055.500L58 1058.500L51.500 1061.500Z" stroke="#b01414" />
              <path d="M30 1059L17 1054M19 1053L17 1054L19 1056" stroke="#128a12" />
              <text x="28" y="1019" fill="#1414d8">z</text>
              <text x="64" y="1056" fill="#b01414">x</text>
              <text x="13" y="1053" fill="#128a12">y</text>
            </g>
          </svg>

          <svg class="cube" viewBox="0 0 80 76">
            <defs>
              <radialGradient id="cube-shadow"><stop offset="0" stop-color="#3c3c3c" stop-opacity=".7" /><stop offset="1" stop-color="#3c3c3c" stop-opacity="0" /></radialGradient>
            </defs>
            <ellipse cx="42" cy="60" rx="36" ry="13" fill="url(#cube-shadow)" />
            <path d="M6 7L24 12V66L7 54Z" fill="#a6a6a6" stroke="#8a8a8a" />
            <path d="M24 12L71 8L70 55L24 66Z" fill="#b0b0b0" stroke="#8a8a8a" />
            <path d="M24 62Q40 46 70 51V55L24 66Z" fill="#929292" />
            <path d="M6 7L40 5L71 8L24 12Z" fill="#bcbcbc" stroke="#8a8a8a" />
            <text x="37" y="41" font-size="11" transform="rotate(-4 37 41)">LEFT</text>
            <text x="7" y="36" font-size="5" transform="rotate(8 7 36)">FRONT</text>
          </svg>

          <svg v-for="c in ['nw', 'ne', 'sw', 'se']" :key="c" class="corner" :class="c"><use href="#t-corner" /></svg>

          <section class="win palette">
            <div class="win-head">
              <h2>Palette</h2>
              <button v-for="t in ['t-size', 't-list', 't-left', 't-close']" :key="t" :aria-label="t"><svg><use :href="`#${t}`" /></svg></button>
            </div>
            <div class="palette-body">
              <div class="rail"><i class="grip" /></div>
              <ul class="palette-list">
                <li v-for="p in palette" :key="p"><button>{{ p }}</button></li>
              </ul>
            </div>
          </section>

          <section class="win shade">
            <div class="win-head">
              <h2>Diagnostic Shade</h2>
              <button v-for="t in floatButtons" :key="t" :aria-label="t"><svg><use :href="`#${t}`" /></svg></button>
            </div>
            <div class="shade-icons">
              <button v-for="s in shades" :key="s.label" class="tile">
                <svg><use :href="`#${s.icon}`" /><use v-if="s.on" href="#brackets" /></svg>
                <span>{{ s.label }}</span>
              </button>
            </div>
            <div class="shade-body">
              <div class="rail" />
              <div class="shade-form">
                <label for="tolerance">Tolerance</label>
                <div class="tolerance">
                  <input id="tolerance" v-model="tolerance" type="text" />
                  <input v-model="toleranceStep" class="slider" type="range" min="0" max="100" aria-label="Tolerance slider" />
                </div>
                <div class="tessellator">
                  <label for="tess">Tessellator</label>
                  <span class="drop"><select id="tess"><option>Fast</option></select></span>
                </div>
                <hr />
              </div>
            </div>
          </section>

          <section class="win shelf">
            <div class="win-head active">
              <h2>Subdiv Shelf</h2>
              <button v-for="t in floatButtons" :key="t" :aria-label="t"><svg><use :href="`#${t}`" /></svg></button>
            </div>
            <div class="shelf-body">
              <div class="rail"><i class="grip" /></div>
              <div class="shelf-main">
                <div class="tab-row"><button class="tab">SUBD</button></div>
                <div class="shelf-tools">
                  <template v-for="(s, i) in shelf" :key="i">
                    <i v-if="!s" class="slot" />
                    <i v-else-if="s === '|'" class="slot rule" />
                    <button v-else class="tile" :class="{ bin: s.icon === 'trash' }">
                      <svg>
                        <use :href="`#${s.icon}`" />
                        <use v-if="s.on" href="#brackets" />
                        <use v-if="s.opt" href="#option" />
                      </svg>
                      <span>{{ s.label }}</span>
                    </button>
                  </template>
                </div>
              </div>
            </div>
          </section>
        </div>
      </main>

      <aside class="panel">
        <div class="win-head">
          <h2>Control Panel</h2>
          <button v-for="t in ['t-list', 't-right', 't-close']" :key="t" :aria-label="t"><svg><use :href="`#${t}`" /></svg></button>
        </div>
        <div class="panel-top">
          <div class="panel-pick">
            <span class="drop"><select aria-label="Shelf"><option>Subdiv</option></select></span>
            <div class="panel-menu"><button aria-label="Shelf menu"><svg><use href="#t-list" /></svg></button></div>
          </div>
          <button class="panel-trash" aria-label="Trash"><svg><use href="#trash" /></svg></button>
        </div>

        <div class="panel-shelves">
          <div class="rail" />
          <div class="groups">
            <section v-for="g in groups" :key="g.name" class="group">
              <div class="tab-row"><button class="tab">{{ g.name }}</button></div>
              <div class="group-tiles">
                <button v-for="t in g.tools" :key="t.label" class="tile" :class="{ 'row-end': t.last }">
                  <svg>
                    <use :href="`#${t.icon}`" />
                    <use v-if="t.on" href="#brackets" />
                    <use v-if="t.opt" href="#option" />
                  </svg>
                  <span>{{ t.label }}</span>
                </button>
              </div>
            </section>
          </div>
        </div>

        <div class="picked"><span class="drop"><select aria-label="Picked"><option>0 picked objects</option></select></span></div>

        <div class="numbers">
          <div v-for="n in ['Degree', 'Spans']" :key="n" class="number-row">
            <label :for="n">{{ n }}</label>
            <input :id="n" type="text" disabled />
            <input type="text" disabled :aria-label="`${n} V`" />
          </div>
        </div>

        <div class="display">
          <div class="rail" />
          <div class="display-form">
            <button class="fold open">Display</button>
            <div v-for="c in checks" :key="c.label" class="check-row">
              <label><span>{{ c.label }}</span><input v-model="c.on" type="checkbox" /></label>
              <label v-if="c.pair" class="pair"><span>V</span><input type="checkbox" /></label>
            </div>
            <button class="fold sub">Transparency</button>
            <button class="fold sub">Quality</button>
          </div>
        </div>

        <div class="panel-foot">
          <div class="rail" />
          <div class="foot-tiles">
            <button v-for="t in footTools" :key="t.label" class="tile">
              <svg>
                <use :href="`#${t.icon}`" />
                <use v-if="t.opt" href="#option" />
                <template v-if="t.icon === 'scnsrf'">
                  <text x="1" y="7" class="min">min</text>
                  <text x="11" y="29" class="max">max</text>
                </template>
              </svg>
              <span>{{ t.label }}</span>
            </button>
          </div>
        </div>
      </aside>
    </div>
  </div>
</template>

<script setup>
import { computed, reactive, ref } from "vue";

const menus = ["File", "Edit", "Delete", "Layouts", "ObjectDisplay", "WindowDisplay", "Layers", "Render", "VR", "Windows", "Preferences", "Utilities", "Help"];
const snaps = ["snap-point", "snap-grid", "snap-curve"];
const floatButtons = ["t-size", "t-list", "t-down", "t-close"];
const palette = ["Pick", "Transform", "Curves", "Curve Edit", "Object Edit", "Surfaces", "Surface Edit", "Subdivision", "Mesh", "View", "Construction", "Locators", "Evaluate"];

const prompt = ref("Use mouse or enter name of item to pick /unpick: [Left Toggle ] [Middle Add ] [Right Unpick ]");
const tolerance = ref("0.1000");
const toleranceStep = ref(48);

const tool = (label, icon, flags = "") => ({
  label,
  icon,
  on: flags.includes("b"),
  opt: flags.includes("o")
});

const shades = [
  tool("shdnon", "wire"), tool("mulcol", "s-mul"), tool("rancol", "s-ran"), tool("curevl", "s-cur"),
  tool("isoang", "s-iso"), tool("horver", "s-hor"), tool("surevl", "s-sur"), tool("usetex", "s-use"),
  tool("ltunnel", "s-tun"), tool("clayao", "s-clay"), tool("sophotes", "s-soph"), tool("vred", "s-vred"),
  tool("vis1", "s-vis"), tool("vis2", "s-vis"), tool("vis3", "s-vis"), tool("filest", "s-file"),
  tool("boxmod", "box-shade", "b")
];

// null is an empty slot, "|" a divider
const shelf = [
  tool("Trash", "trash"), null, tool("import", "import"), tool("export", "export", "o"), "|",
  tool("edge", "edge"), tool("e loop", "eloop"), tool("face", "face"), tool("f loop", "floop"),
  tool("loop fe", "loopfe"), tool("grow", "grow"), tool("shrink", "shrink"), tool("subd", "subd"), "|",
  tool("crt set", "crtset", "bo"), tool("sel set", "selset", "b"), "|",
  tool("cv crv", "cvcrv", "o"), tool("circle", "circle", "o"), "|",
  tool("sd pln", "plane", "o"), tool("sd box", "box", "o"), tool("sd cyl", "cyl", "o"), tool("sd ext", "ext", "bo"),
  tool("brdge", "bridge", "o"), tool("bevel", "bevel", "o"), tool("insedg", "insedg", "o"), tool("cut", "cut", "o"),
  tool("flhole", "flhole", "o"), tool("crease", "crease"), tool("uncrs", "uncrs"), tool("weld", "weld", "o"),
  tool("unwld", "unwld"), tool("alignc", "alignc", "o"), tool("aligns", "aligns", "o"), tool("extract", "extract", "o"),
  tool("retop", "retop", "bo"), "|", tool("symm", "symm"), "|",
  tool("to nurbs", "tonurbs", "o"), tool("to mesh", "tomesh", "o")
];

const groups = [
  { name: "Single_Key_Hotkeys", tools: [tool("tsngle", "keys")] },
  { name: "Transform_Tool", tools: ["q", "w", "e", "r"].map((k) => tool(k, "gizmo", "bo")) },
  {
    name: "Display_Tools",
    tools: [
      tool("1", "box-shade", "bo"), tool("2", "wire"), { ...tool("3", "wire-ball", "o"), last: true },
      tool("4_on", "dome", "o"), tool("5_off", "dome", "o")
    ]
  },
  { name: "Navigation", tools: [tool("alias", "nav", "o"), tool("maya", "nav", "o"), tool("f", "film", "o")] }
];

const footTools = [tool("xfrmcv", "xfrmcv", "o"), tool("scnsrf", "scnsrf"), tool("curva", "curva"), tool("xsedit", "xsedit")];

const checks = reactive([
  { label: "Deviation", on: true },
  { label: "Cv/Hull", on: false },
  { label: "Edit Points", on: false },
  { label: "Blend Points", on: false },
  { label: "Isoparm U", on: false, pair: true },
  { label: "Curvature U", on: false, pair: true }
]);

// perspective ground plane: origin plus one weighted corner per axis
const CELLS = 33;
const ORIGIN = [875, 573];
const U_END = { at: [1765, 494], w: 1.2476 };
const V_END = { at: [509, 444], w: 1.529 };

function project(u, v) {
  const w = 1 + u * (U_END.w - 1) + v * (V_END.w - 1);
  return [0, 1]
    .map((k) => (ORIGIN[k] + u * (U_END.w * U_END.at[k] - ORIGIN[k]) + v * (V_END.w * V_END.at[k] - ORIGIN[k])) / w)
    .map((n) => n.toFixed(1))
    .join(" ");
}

const segment = (a, b) => `M${project(...a)}L${project(...b)}`;

const gridPath = computed(() => {
  let d = "";
  for (let i = -CELLS; i <= CELLS; i++) {
    const t = i / CELLS;
    if (i !== 0) d += segment([t, -1], [t, 1]) + segment([-1, t], [1, t]);
  }
  return d;
});

const axisPath = segment([0, -1], [0, 1]) + segment([-1, 0], [1, 0]);
</script>

<style>
body {
  overflow: hidden;
}
</style>

<style scoped>
.app {
  height: 100vh;
  display: flex;
  flex-direction: column;
  box-sizing: border-box;
  border-left: 2px solid #4d757a;
  background: #dcdcdc;
  color: #000;
  font: 11px/14px Roboto, "Liberation Sans", sans-serif;
}

.app *,
.app *::before,
.app *::after {
  box-sizing: border-box;
}

.sprite {
  position: absolute;
  width: 0;
  height: 0;
}

svg {
  display: block;
  flex-shrink: 0;
}

button,
input,
select {
  font: inherit;
  color: inherit;
  margin: 0;
  padding: 0;
  border: 0;
  border-radius: 0;
  background: none;
}

a {
  color: inherit;
  text-decoration: none;
}

/* title bar */
.titlebar {
  position: relative;
  height: 23px;
  flex-shrink: 0;
  display: flex;
  align-items: center;
  background: #fff;
}

.logo {
  width: 14px;
  height: 14px;
}

.app-title {
  margin-left: 7px;
  font: 11px/20px "Noto Sans", sans-serif;
  color: #979797;
}

.top-strip {
  position: absolute;
  left: 838px;
  top: 0;
  width: 241px;
  height: 1px;
  background: linear-gradient(90deg, #4fa3ac 48px, #222 48px);
}

.window-buttons {
  margin-left: auto;
  padding-right: 1px;
  display: flex;
}

.window-buttons button {
  width: 46px;
  height: 20px;
  display: grid;
  place-items: center;
}

.window-buttons svg {
  width: 12px;
  height: 12px;
  fill: none;
  stroke: #8d8d8d;
}

.workspace {
  flex: 1;
  min-height: 0;
  display: grid;
  grid-template-columns: minmax(0, 1fr) 170px;
}

.main {
  display: flex;
  flex-direction: column;
  min-width: 0;
  min-height: 0;
}

/* command area */
.command {
  display: flex;
  height: 44px;
}

.tool-button {
  width: 31px;
  display: flex;
  flex-direction: column;
  align-items: center;
  border-right: 1px solid #8c8c8c;
  font-size: 9px;
  line-height: 12px;
}

.tool-button svg {
  width: 30px;
  height: 32px;
}

.command-rows {
  flex: 1;
  min-width: 0;
}

.menu-row {
  height: 27px;
  display: flex;
  justify-content: space-between;
}

.menus {
  display: flex;
  align-items: center;
  gap: 15px;
  padding: 4px 0 0 6px;
}

.user {
  width: 138px;
  margin-top: 7px;
  padding-top: 1px;
  display: flex;
  align-items: center;
  gap: 6px;
  border: 1px solid #8c8c8c;
  border-right: 0;
  border-bottom: 0;
  background: #e4e4e4;
}

.user svg {
  width: 17px;
  height: 17px;
}

.prompt-row {
  height: 17px;
  display: flex;
}

.prompt-row > button {
  padding-top: 2px;
  border: 1px solid #8c8c8c;
  border-width: 1px 1px 0 0;
  background: #e4e4e4;
}

.prompt-row .category {
  width: 143px;
}

.prompt-row .pick-kind {
  width: 120px;
  padding-top: 1px;
  display: flex;
  align-items: center;
  color: #777;
}

.pick-kind svg {
  width: 15px;
  height: 15px;
  margin-left: 2px;
}

.pick-kind span {
  flex: 1;
  padding-right: 17px;
}

.prompt-row .history {
  width: 24px;
  padding: 0;
  display: grid;
  place-items: center;
  border-color: #8c8c8c transparent;
}

.history svg {
  width: 13px;
  height: 13px;
}

.prompt {
  flex: 1;
  min-width: 0;
  padding: 1px 3px 0;
  border: 1px solid #111;
  background: #f1f1f1;
}

.prompt-row .prefs {
  width: 127px;
}

.prompt-row .spaces {
  width: 72px;
}

.snaps {
  width: 92px;
  display: flex;
  align-items: center;
  justify-content: space-between;
  padding: 0 6px 0 4px;
  border-top: 1px solid #8c8c8c;
}

.snaps svg {
  width: 18px;
  height: 16px;
}

.snaps .more svg {
  width: 10px;
  height: 15px;
  fill: none;
  stroke: #000;
}

/* view header */
.view-bar {
  height: 21px;
  flex-shrink: 0;
  display: flex;
  align-items: center;
  padding: 0 1px;
  background: #939393;
  border-bottom: 1px solid #000;
  font-size: 10px;
}

.view-bar button,
.view-bar button svg {
  width: 17px;
  height: 17px;
}

.camera {
  margin-left: 19px;
}

.view-bar .arrows {
  width: 15px;
  height: 11px;
  margin: 0 3px;
}

.view-bar .grid-size {
  width: 19px;
  height: 13px;
  margin: 0 3px 0 11px;
}

.view-tools {
  display: flex;
  gap: 6px;
}

.view-tools:first-of-type {
  margin-left: auto;
}

.moves {
  margin: 0 56px 0 76px;
}

.view-bar .show {
  width: 44px;
  border: 1px solid #222;
  padding-right: 6px;
  font-size: 11px;
}

.view-bar .three {
  border: 1px solid #222;
  font-size: 11px;
}

/* scene */
.scene {
  position: relative;
  flex: 1;
  min-height: 0;
  overflow: hidden;
  background: linear-gradient(#8b8b8b, #9a9a9a 32%, #a6a6a6 60%, #b1b1b1);
}

.grid {
  width: 100%;
  height: 100%;
}

.grid-line {
  fill: none;
  stroke: #7c7c7c;
  stroke-opacity: .62;
}

.axis-line {
  fill: none;
  stroke: #000;
}

.axis-mark path {
  fill: none;
}

.axis-mark text {
  font-size: 14px;
}

.axis-mark.small text {
  font-size: 9px;
}

.cube {
  position: absolute;
  top: 32px;
  right: 21px;
  width: 80px;
  height: 76px;
  fill: #6f6f6f;
  font-weight: 700;
}

.corner {
  position: absolute;
  width: 10px;
  height: 10px;
}

.nw { left: -1px; top: 0; }
.ne { right: 0; top: 0; }
.sw { left: -1px; bottom: 0; }
.se { right: 0; bottom: 0; }

/* floating windows */
.win {
  position: absolute;
  display: flex;
  flex-direction: column;
  border: 1px solid #111;
  background: #dcdcdc;
}

.win-head {
  height: 20px;
  flex-shrink: 0;
  display: flex;
  align-items: center;
  gap: 4px;
  padding: 0 3px 0 10px;
  border-bottom: 1px solid #111;
  background: #cbcbcb;
}

.win-head.active {
  background: #a9bac9;
}

.win-head h2 {
  flex: 1;
  margin: 0;
  padding-top: 1px;
  font: inherit;
  white-space: nowrap;
}

.win-head button,
.win-head svg,
.panel-menu svg {
  width: 13px;
  height: 13px;
}

.rail {
  width: 12px;
  flex-shrink: 0;
  display: grid;
  place-items: center;
  border: 1px solid #8c8c8c;
  border-width: 1px 2px 1px 1px;
  background: #e4e4e4;
}

.grip {
  width: 6px;
  height: 8px;
  background: repeating-linear-gradient(#8c8c8c 0 1px, transparent 1px 3px);
}

.tile {
  width: 36px;
  display: flex;
  flex-direction: column;
  align-items: center;
  font-size: 9px;
  line-height: 12px;
  white-space: nowrap;
}

.tile svg {
  width: 30px;
  height: 30px;
}

.tile span {
  margin-top: 3px;
}

.tab-row {
  display: flex;
  border-bottom: 1px solid #a3a3a3;
}

.tab {
  width: 105px;
  height: 21px;
  margin-bottom: -1px;
  border: 1px solid #a3a3a3;
  border-bottom: 0;
  background: linear-gradient(#e6e6e6, #dcdcdc);
}

.palette {
  left: -1px;
  top: 405px;
  width: 131px;
  height: 441px;
}

.palette-body {
  flex: 1;
  min-height: 0;
  display: flex;
  padding: 2px 1px 1px 0;
}

.palette .rail {
  width: 15px;
}

.palette-list {
  flex: 1;
  margin: 0;
  padding: 1px 0 0;
  list-style: none;
}

.palette-list li {
  height: 22px;
  margin-bottom: 4px;
  border-bottom: 1px solid #a3a3a3;
}

.palette-list button {
  width: 104px;
  height: 21px;
  border: 1px solid #a3a3a3;
  border-bottom: 0;
  border-radius: 3px 3px 0 0;
  background: linear-gradient(#c9c9c9, #dedede);
}

.shade {
  right: 41px;
  top: 369px;
  width: 169px;
  height: 465px;
}

.shade-icons {
  height: 246px;
  display: grid;
  grid-template-columns: repeat(4, 36px);
  grid-auto-rows: 49px;
  padding: 3px 0 0 12px;
  border-bottom: 1px solid #111;
}

.shade-body {
  flex: 1;
  min-height: 0;
  display: flex;
  padding-top: 1px;
}

.shade-form {
  flex: 1;
  min-width: 0;
  display: flex;
  flex-direction: column;
  padding: 6px 4px 0 0;
}

.shade-form > label {
  padding-left: 4px;
}

.tolerance {
  height: 16px;
  display: flex;
  margin: 0 4px 0 3px;
  border: 1px solid #8c8c8c;
}

.tolerance input[type="text"] {
  width: 51px;
  flex-shrink: 0;
  text-align: center;
  background: #f1f1f1;
  border-right: 1px solid #8c8c8c;
}

.slider {
  flex: 1;
  width: 0;
  min-width: 0;
  appearance: none;
  background: linear-gradient(90deg, #dcdcdc 48%, #a1a1a1 48%);
}

.slider::-webkit-slider-thumb {
  appearance: none;
  width: 4px;
  height: 14px;
  border: 1px solid #8c8c8c;
  background: #eee;
}

.tessellator {
  display: flex;
  align-items: center;
  margin-top: 9px;
}

.tessellator .drop {
  flex: 1;
  min-width: 0;
  height: 19px;
  margin: 0 4px 0 2px;
  border: 1px solid #8c8c8c;
}

.shade-form hr {
  width: 100%;
  margin: 12px 0 0;
  border: 0;
  border-top: 1px solid #cbcbcb;
}

.drop {
  position: relative;
  display: block;
  height: 15px;
  background: #e4e4e4;
}

.drop select {
  width: 100%;
  height: 100%;
  appearance: none;
  text-align-last: center;
}

.drop::after {
  content: "";
  position: absolute;
  right: 2px;
  top: 50%;
  margin-top: -4px;
  border: 4px solid transparent;
  border-top: 7px solid #6b6b6b;
  border-bottom: 0;
}

.shelf {
  left: 78px;
  right: 103px;
  bottom: 0;
  height: 99px;
}

.shelf-body {
  flex: 1;
  min-height: 0;
  display: flex;
  padding-top: 1px;
}

.shelf .rail {
  width: 15px;
}

.shelf-main {
  flex: 1;
  min-width: 0;
  padding-top: 3px;
}

.shelf-tools {
  display: flex;
  height: 50px;
  margin-top: 2px;
  padding-top: 2px;
  border-left: 1px solid #111;
}

.shelf-tools .tile,
.slot {
  flex-shrink: 0;
  width: 36px;
}

.shelf-tools .bin svg {
  width: 28px;
  height: 28px;
  margin-top: 4px;
}

.slot.rule {
  height: 30px;
  background: linear-gradient(#111, #111) center / 1px 100% no-repeat;
}

/* control panel */
.panel {
  min-height: 0;
  display: flex;
  flex-direction: column;
  border: solid #111;
  border-width: 1px 2px 0 1px;
}

.panel .win-head {
  padding-right: 4px;
}

.panel-top {
  height: 35px;
  flex-shrink: 0;
  display: flex;
  border-bottom: 1px solid #8c8c8c;
}

.panel-pick {
  width: 135px;
}

.panel-pick .drop {
  height: 16px;
  border: 1px solid #8c8c8c;
  border-width: 0 1px 1px 0;
}

.panel-pick select {
  padding-top: 2px;
}

.panel-menu {
  height: 18px;
  display: flex;
  justify-content: flex-end;
  align-items: center;
  padding-right: 1px;
  border: 1px solid #8c8c8c;
  border-width: 1px 1px 0 0;
}

.panel-trash {
  flex: 1;
}

.panel-trash svg {
  width: 30px;
  height: 30px;
  margin: 2px auto 0;
}

.panel-shelves {
  height: 463px;
  display: flex;
  padding-top: 2px;
}

.groups {
  flex: 1;
  padding-right: 1px;
}

.group .tab-row {
  margin-bottom: 5px;
}

.group-tiles {
  display: flex;
  flex-wrap: wrap;
}

.group-tiles .tile {
  height: 49px;
}

.groups .row-end {
  margin-right: 36px;
}

.picked {
  height: 50px;
  padding-top: 9px;
  border: 1px solid #8c8c8c;
  border-width: 1px 0;
}

.picked .drop {
  height: 21px;
  border: 2px solid #8c8c8c;
  border-width: 2px 0;
}

.picked .drop select {
  padding-left: 5px;
}

.numbers {
  height: 48px;
  display: flex;
  flex-direction: column;
  gap: 4px;
  padding-top: 3px;
  border-bottom: 1px solid #8c8c8c;
}

.number-row {
  height: 18px;
  display: flex;
  align-items: center;
  gap: 4px;
  color: #777;
}

.number-row label {
  width: 54px;
  margin-right: 5px;
  padding-top: 3px;
  text-align: right;
}

.number-row input {
  width: 46px;
  height: 18px;
  border: 1px solid #6b6b6b;
}

.display {
  flex: 1;
  min-height: 0;
  display: flex;
  padding-top: 2px;
}

.display-form {
  flex: 1;
  display: flex;
  flex-direction: column;
  padding: 2px 5px 0 0;
}

.fold {
  height: 23px;
  display: flex;
  align-items: center;
  gap: 11px;
  padding-left: 27px;
}

.fold::before {
  content: "";
  border: 4px solid transparent;
  border-left: 8px solid #000;
  border-right: 0;
}

.fold.open {
  height: 19px;
  margin-bottom: 3px;
  gap: 10px;
  padding-left: 7px;
  background: #f1f1f1;
}

.fold.open::before {
  border: 4px solid transparent;
  border-top: 8px solid #000;
  border-bottom: 0;
}

.check-row {
  height: 23px;
  display: flex;
  justify-content: space-between;
}

.check-row label {
  width: 89px;
  display: flex;
  align-items: flex-start;
  justify-content: flex-end;
  gap: 4px;
  line-height: 20px;
}

.check-row .pair {
  width: auto;
  margin-right: 2px;
  gap: 5px;
}

.check-row input {
  width: 19px;
  height: 19px;
  appearance: none;
  border: 1px solid #8c8c8c;
  background: #e0e0e0;
}

.check-row input:checked {
  background: #e6fbfb;
}

.check-row input:checked::before {
  content: "";
  display: block;
  width: 13px;
  height: 6px;
  margin: 4px 0 0 3px;
  border: solid #000;
  border-width: 0 0 1px 1px;
  transform: rotate(-45deg);
}

.panel-foot {
  height: 54px;
  flex-shrink: 0;
  display: flex;
  margin-top: 1px;
  padding: 2px 0 1px;
  border-top: 1px solid #8c8c8c;
}

.foot-tiles {
  display: flex;
}

.foot-tiles text {
  font-size: 8px;
  font-weight: 700;
}

.min {
  fill: #2737b0;
}

.max {
  fill: #a52020;
}
</style>
